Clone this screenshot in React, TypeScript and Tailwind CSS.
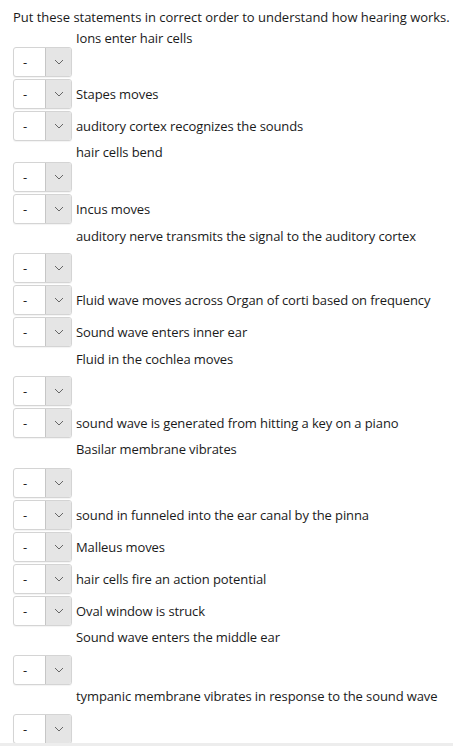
import React from "react";

type Row =
  | { kind: "text"; text: string; mt: string }
  | { kind: "select"; text?: string; mt: string };

const rows: Row[] = [
  { kind: "text", text: "Ions enter hair cells", mt: "mt-[1px]" },
  { kind: "select", mt: "-mt-[1px]" },
  { kind: "select", text: "Stapes moves", mt: "mt-[2px]" },
  { kind: "select", text: "auditory cortex recognizes the sounds", mt: "mt-[2px]" },
  { kind: "text", text: "hair cells bend", mt: "mt-[1px]" },
  { kind: "select", mt: "mt-0" },
  { kind: "select", text: "Incus moves", mt: "mt-[2px]" },
  { kind: "text", text: "auditory nerve transmits the signal to the auditory cortex", mt: "mt-[2px]" },
  { kind: "select", mt: "mt-[7px]" },
  { kind: "select", text: "Fluid wave moves across Organ of corti based on frequency", mt: "mt-[2px]" },
  { kind: "select", text: "Sound wave enters inner ear", mt: "mt-[2px]" },
  { kind: "text", text: "Fluid in the cochlea moves", mt: "mt-[2px]" },
  { kind: "select", mt: "mt-[7px]" },
  { kind: "select", text: "sound wave is generated from hitting a key on a piano", mt: "mt-[2px]" },
  { kind: "text", text: "Basilar membrane vibrates", mt: "mt-[1px]" },
  { kind: "select", mt: "mt-[9px]" },
  { kind: "select", text: "sound in funneled into the ear canal by the pinna", mt: "mt-[2px]" },
  { kind: "select", text: "Malleus moves", mt: "mt-[2px]" },
  { kind: "select", text: "hair cells fire an action potential", mt: "mt-[2px]" },
  { kind: "select", text: "Oval window is struck", mt: "mt-[2px]" },
  { kind: "text", text: "Sound wave enters the middle ear", mt: "mt-[1px]" },
  { kind: "select", mt: "mt-[8px]" },
  { kind: "text", text: "tympanic membrane vibrates in response to the sound wave", mt: "mt-[1px]" },
  { kind: "select", mt: "mt-[8px]" },
];

function Select() {
  return (
    <div className="flex h-[30px] w-[59px] shrink-0 overflow-hidden rounded-[3px] border border-[#d4d4d4] bg-white shadow-[0_1px_1px_rgba(0,0,0,0.05)]">
      <div className="flex flex-1 items-center pl-[9px] text-[13px] leading-none text-[#222]">-</div>
      <div className="flex w-[26px] items-center justify-center border-l border-[#c6c6c6] bg-[#e5e5e5]">
        <svg width="10" height="6" viewBox="0 0 10 6" fill="none">
          <path d="M1 1 L5 5 L9 1" stroke="#666" strokeWidth="1" />
        </svg>
      </div>
    </div>
  );
}

export default function App() {
  return (
    <div
      className="relative h-[746px] w-[453px] overflow-hidden bg-white px-[13px] pt-[7px] text-[13px] text-[#1a1a1a]"
      style={{ fontFamily: '"Open Sans", "Noto Sans", sans-serif' }}
    >
      <div className="h-[20px] whitespace-nowrap leading-[20px] tracking-[-0.02px]">
        Put these statements in correct order to understand how hearing works.
      </div>
      {rows.map((r, i) =>
        r.kind === "text" ? (
          <div
            key={i}
            className={`${r.mt} h-[20px] whitespace-nowrap pl-[63px] leading-[20px] tracking-[-0.1px]`}
          >
            {r.text}
          </div>
        ) : (
          <div key={i} className={`${r.mt} flex h-[30px] items-center gap-[4px]`}>
            <Select />
            {r.text && (
              <span className="-mt-[1px] whitespace-nowrap leading-[20px] tracking-[-0.1px]">{r.text}</span>
            )}
          </div>
        )
      )}
      <div className="absolute bottom-0 left-0 h-[3px] w-full bg-[#ededed]" />
    </div>
  );
}
